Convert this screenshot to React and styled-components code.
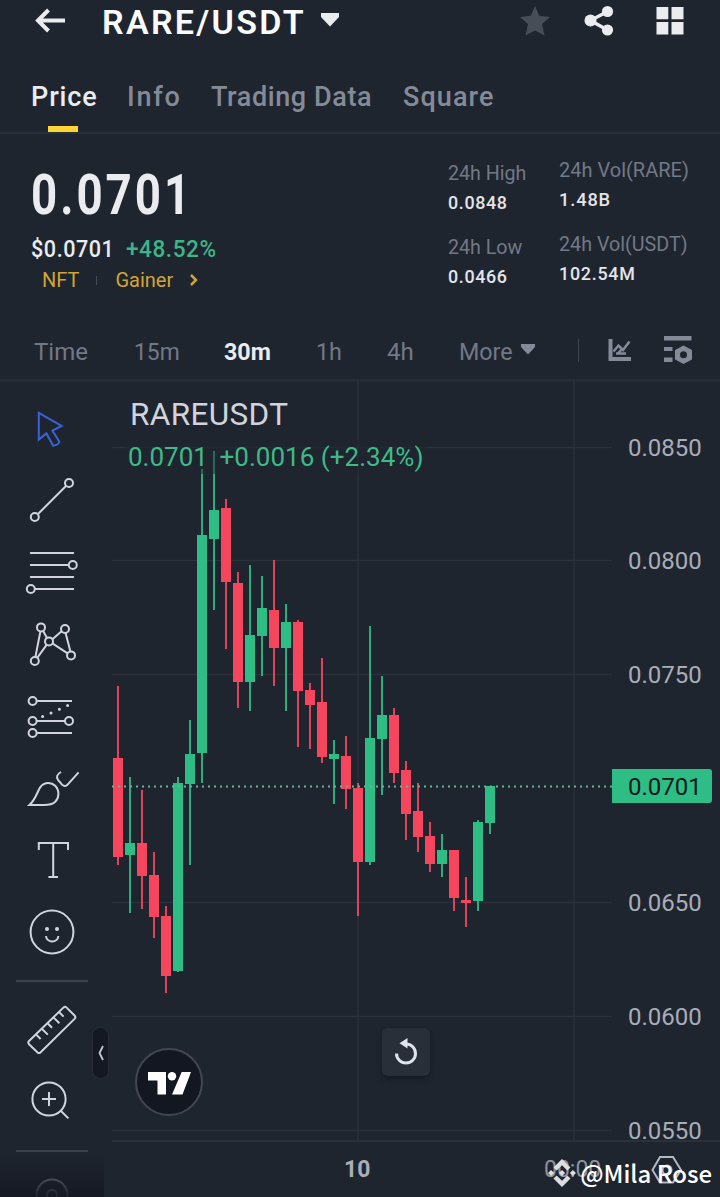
import React from "react";
import styled, { createGlobalStyle } from "styled-components";

const GlobalStyle = createGlobalStyle`
  body {
    margin: 0;
    background-color: #1f252f;
    font-family: Roboto, "Liberation Sans", sans-serif;
  }
`;

const Page = styled.div`
  position: relative;
  display: flex;
  flex-direction: column;
  width: 720px;
  height: 1197px;
  overflow: hidden;
  background-color: #1f252f;
`;

const Label = styled.span`
  display: inline-block;
  white-space: nowrap;
  letter-spacing: ${(props) => (props.$spacing ? `${props.$spacing}px` : "inherit")};
  transform: scaleX(${(props) => props.$stretch || 1});
  transform-origin: left center;
`;

const Header = styled.header`
  display: flex;
  align-items: center;
  height: 42px;
  padding: 0 36px 0 34px;
`;

const Pair = styled.h1`
  flex: 1;
  display: flex;
  align-items: center;
  gap: 14px;
  margin: 1px 0 0 36px;
  font-size: 34px;
  line-height: 40px;
  font-weight: 600;
  letter-spacing: 2.3px;
  color: #fafbfd;
`;

const HeaderActions = styled.div`
  display: flex;
  align-items: center;
  gap: 32px;
`;

const ShareIcon = styled.svg`
  margin-right: 9px;
`;

const Tabs = styled.nav`
  display: grid;
  grid-template-columns: 96px 84px 192px auto;
  height: 90px;
  padding-left: 31px;
  border-bottom: 2px solid #292f39;
  box-sizing: content-box;
`;

const Tab = styled.div`
  display: flex;
  flex-direction: column;
  justify-content: space-between;
  padding-top: 39px;
  font-size: 27px;
  line-height: 32px;
  font-weight: 500;
  letter-spacing: 0.6px;
  color: ${(props) => (props.$active ? "#eaecef" : "#848b98")};
`;

const Underline = styled.div`
  width: 30px;
  height: 6px;
  margin-left: 17px;
  background-color: #fcd535;
`;

const Summary = styled.section`
  display: flex;
  height: 187px;
`;

const PriceBlock = styled.div`
  width: 448px;
  padding: 29px 0 0 31px;
  box-sizing: border-box;
`;

const Price = styled.div`
  height: 66px;
  font-size: 55px;
  line-height: 65px;
  font-weight: 700;
  color: #eaecef;
`;

const Change = styled.div`
  display: grid;
  grid-template-columns: 95px auto;
  margin-top: 5px;
  font-size: 24px;
  line-height: 30px;
  font-weight: 500;
  color: #eaecef;
`;

const Up = styled.span`
  color: #3fb488;
`;

const Tags = styled.div`
  display: flex;
  align-items: center;
  margin: 3px 0 0 11px;
  font-size: 20px;
  line-height: 26px;
  color: #d0a535;
`;

const TagDivider = styled.div`
  width: 1px;
  height: 9px;
  margin: 0 18px 0 17px;
  background-color: #454b56;
`;

const TagArrow = styled.svg`
  margin-left: 16px;
`;

const Stats = styled.div`
  width: ${(props) => props.$width}px;
  padding-top: ${(props) => props.$top}px;
`;

const Stat = styled.div`
  height: 74px;
  font-size: 20px;
  line-height: 30px;
  color: #727986;
`;

const StatValue = styled.div`
  font-size: 19px;
  line-height: 30px;
  font-weight: 500;
  color: #e2e5ea;
`;

const Intervals = styled.div`
  display: grid;
  grid-template-columns: 100px 90px 92px 71px 72px 119px 30px 56px auto;
  align-items: center;
  height: 58px;
  padding-left: 34px;
  border-bottom: 3px solid #262c36;
  font-size: 24px;
`;

const Interval = styled.div`
  display: flex;
  align-items: center;
  gap: 8px;
  margin-top: 3px;
  font-weight: ${(props) => (props.$active ? 700 : 400)};
  color: ${(props) => (props.$active ? "#eaecef" : "#727986")};
`;

const MoreArrow = styled.svg`
  margin: -4px 0 0 -1px;
`;

const IntervalDivider = styled.div`
  width: 1px;
  height: 23px;
  background-color: #404650;
`;

const Workspace = styled.main`
  flex: 1;
  display: flex;
  min-height: 0;
`;

const Toolbar = styled.aside`
  display: flex;
  flex-direction: column;
  align-items: center;
  gap: 16px;
  width: 104px;
  padding-top: 18px;
  box-sizing: border-box;
  overflow: hidden;
`;

const ToolGlyph = styled.svg`
  flex: none;
  width: 56px;
  height: 56px;
  fill: none;
  stroke: ${(props) => props.$color || "#d1d4dc"};
  stroke-width: 1;
`;

const ToolDivider = styled.div`
  flex: none;
  width: 72px;
  height: 2px;
  margin: 4px 0;
  background-color: #3d434e;
`;

const ToolbarFade = styled.div`
  position: absolute;
  left: 0;
  bottom: 0;
  width: 104px;
  height: 48px;
  background: linear-gradient(rgba(20, 24, 35, 0), rgba(20, 24, 35, 0.9));
`;

const ChartArea = styled.div`
  position: relative;
  flex: 1;
`;

const ChartSvg = styled.svg`
  display: block;
  width: 616px;
  height: 815px;
  font-family: Roboto, "Liberation Sans", sans-serif;
`;

const CollapseHandle = styled.div`
  position: absolute;
  left: -12px;
  top: 645px;
  display: flex;
  align-items: center;
  justify-content: center;
  width: 17px;
  height: 52px;
  border-radius: 8px;
  border: 1px solid #272c37;
  box-sizing: border-box;
  background-color: #141823;
`;

const ResetButton = styled.div`
  position: absolute;
  left: 278px;
  top: 646px;
  display: flex;
  align-items: center;
  justify-content: center;
  width: 48px;
  height: 48px;
  border-radius: 6px;
  background-color: #292f39;
  box-shadow: 0 3px 5px rgba(10, 13, 20, 0.45);
`;

const Signature = styled.div`
  position: absolute;
  right: 8px;
  bottom: 7px;
  display: flex;
  align-items: center;
  gap: 4px;
  font-family: "Noto Sans CJK SC", "Noto Sans", sans-serif;
  font-size: 24px;
  line-height: 34px;
  font-weight: 500;
  color: #ffffff;
`;

const GRID = [
  { y: 447.5, label: "0.0850" },
  { y: 560.5, label: "0.0800" },
  { y: 674.5, label: "0.0750" },
  { y: 902.5, label: "0.0650" },
  { y: 1016.5, label: "0.0600" },
  { y: 1130.5, label: "0.0550" },
];

// [rising, high, body top, body bottom, low]
const CANDLES = [
  [0, 686, 758, 857, 865],
  [1, 777, 843, 855, 913],
  [0, 790, 843, 876, 909],
  [0, 852, 875, 917, 938],
  [0, 906, 916, 976, 993],
  [1, 777, 783, 971, 972],
  [1, 720, 754, 784, 865],
  [1, 469, 535, 753, 783],
  [1, 451, 510, 539, 610],
  [0, 499, 508, 582, 649],
  [0, 572, 583, 682, 708],
  [1, 565, 635, 682, 711],
  [1, 576, 608, 636, 676],
  [0, 560, 610, 648, 686],
  [1, 604, 622, 648, 711],
  [0, 620, 622, 691, 747],
  [0, 683, 690, 705, 749],
  [0, 658, 702, 757, 763],
  [1, 740, 754, 759, 804],
  [0, 736, 756, 789, 809],
  [0, 783, 788, 862, 916],
  [1, 626, 738, 862, 865],
  [1, 676, 715, 739, 795],
  [0, 708, 715, 773, 783],
  [0, 761, 770, 814, 840],
  [0, 783, 811, 837, 852],
  [0, 822, 836, 864, 872],
  [1, 834, 850, 864, 877],
  [0, 850, 850, 898, 911],
  [0, 877, 900, 903, 927],
  [1, 820, 822, 901, 911],
  [1, 786, 786, 823, 834],
];

const Chart = () => (
  <ChartSvg viewBox="104 382 616 815">
    <g stroke="#2b313b" strokeWidth="2">
      {GRID.map((line) => (
        <path key={line.label} d={`M112 ${line.y}H612`} strokeWidth="1.5" />
      ))}
      <path d="M358 382V1140M574 382V1140" strokeWidth="1.5" />
      <path d="M112 1141H720" />
    </g>

    {CANDLES.map(([rising, high, top, bottom, low], i) => {
      const x = 118 + i * 12;
      return (
        <g key={x} fill={rising ? "#2ebd85" : "#f6465d"}>
          <rect x={x - 1} y={high} width="2" height={low - high} opacity="0.9" />
          <rect x={x - 5} y={top} width="10" height={bottom - top} />
        </g>
      );
    })}

    <path d="M112 786.5H612" stroke="#62b596" strokeWidth="2" strokeDasharray="2 4" />

    <rect x="124" y="440" width="304" height="34" fill="#1f252f" opacity="0.5" />
    <text x="130" y="425" fontSize="31.5" fill="#d1d4dc" textLength="158">
      RAREUSDT
    </text>
    <g fontSize="26" fill="#3dba88">
      <text x="128" y="465.500">0.0701</text>
      <text x="219.500" y="465.500" textLength="204">+0.0016 (+2.34%)</text>
    </g>

    <g fontSize="24" fill="#a9adb7">
      {GRID.map((line) => (
        <text key={line.label} x="628" y={Math.round(line.y + 8)}>
          {line.label}
        </text>
      ))}
      <text x="344" y="1177" fontWeight="700" fontSize="23">
        10
      </text>
      <text x="544" y="1177" fontSize="23" fill="#8d929d">
        00:00
      </text>
    </g>
    <path d="M612 769H709a3 3 0 0 1 3 3V800a3 3 0 0 1-3 3H612Z" fill="#2ebd85" />
    <text x="628" y="795" fontSize="24" fill="#0c1a1c">
      0.0701
    </text>

    <path
      d="M660 1157H673L681 1170L673 1182.500H660L652.500 1170Z"
      fill="none"
      stroke="#b4b8c1"
      strokeWidth="2"
    />
    <circle cx="667" cy="1170" r="4.500" fill="none" stroke="#b4b8c1" strokeWidth="2" />

    <circle cx="169" cy="1082" r="33" fill="#131722" stroke="#434752" strokeWidth="2" />
    <g fill="#ffffff">
      <path d="M148 1072H166V1094.500H157.500V1080.500H148Z" />
      <circle cx="172" cy="1076.300" r="4.200" />
      <path d="M181.700 1072H191L182.500 1094.500H172Z" />
    </g>
  </ChartSvg>
);

const Tool = ({ color, children }) => (
  <ToolGlyph viewBox="0 0 28 28" $color={color}>
    {children}
  </ToolGlyph>
);

const DrawingTools = () => (
  <Toolbar>
    <Tool color="#3a63d6">
      <path d="M7.400 6.400 18.800 13 14.200 15.300 17.700 20.900Q17.200 22.500 14.600 22.900L11.200 16.700 7.400 19.800Z" />
    </Tool>
    <Tool>
      <circle cx="22.5" cy="5.5" r="2" />
      <circle cx="5.4" cy="22.500" r="2" />
      <path d="M7 21 21 7" />
    </Tool>
    <Tool>
      <path d="M3 4.500H25M3 10.500H22.300M3 16.500H25M5.400 22.500H25" />
      <circle cx="24.400" cy="10.500" r="2" />
      <circle cx="3.400" cy="22.500" r="2" />
    </Tool>
    <Tool>
      <circle cx="8.500" cy="5.700" r="2" />
      <circle cx="20.500" cy="6.500" r="2" />
      <circle cx="12.500" cy="12.700" r="2" />
      <circle cx="5.400" cy="22.500" r="2" />
      <circle cx="23.500" cy="19.700" r="2" />
      <path d="M8.200 7.700 5.700 20.500M9.500 7.400 11.500 11M11.300 14.400 6.600 20.900M14.200 11.600 18.800 7.600M20.800 8.500 23.200 17.700M14.200 13.700 21.800 18.700" />
    </Tool>
    <Tool>
      <circle cx="4.300" cy="6.500" r="2" />
      <circle cx="4.300" cy="16.500" r="2" />
      <circle cx="4.300" cy="22.500" r="2" />
      <circle cx="22.500" cy="16.500" r="2" />
      <path d="M6.300 6.500H24M6.300 16.500H20.500M6.300 22.500H24" />
      <path d="M9.300 14.300h.01M13.500 12.500h.01M17.700 10.600h.01M21.800 8.700h.01" strokeWidth="1.500" strokeLinecap="round" />
    </Tool>
    <Tool>
      <path d="M2.700 22.500C6 19.500 6.500 16 8.100 13.700C9.800 11 13.500 10.800 15.600 12.900C17.900 15.300 17.600 19 15.500 21C13.800 22.500 12 22.500 10 22.500Z" />
      <path d="M18.500 6C16.500 7.200 16 8.500 17 9.900L19 12.300C20 13.300 21 13.200 21.900 12.200L27.300 6.200" />
    </Tool>
    <Tool>
      <path d="M7.400 9V5.500H22V9M14.600 5.500V22.500M12.200 22.500H17" />
    </Tool>
    <Tool>
      <circle cx="14" cy="14" r="10.700" />
      <path d="M11 16C11.300 19.600 16.900 19.600 17.200 16" />
      <path d="M11.500 12.500h.01M16.500 12.500h.01" strokeWidth="2" strokeLinecap="round" />
    </Tool>
    <ToolDivider />
    <Tool>
      <path
        d="M2.400 19.600 19.800 2.700Q20.500 2.100 21.200 2.700L25.400 6.900Q26 7.600 25.400 8.300L8.200 25.200Q7.500 25.800 6.800 25.200L2.400 21Q1.900 20.300 2.400 19.600Z"
      />
      <path d="M6 16.200 8.300 18.500M8.900 13.400 11.900 16.300M11.800 10.600 14 12.900M14.700 7.700 17.700 10.600M17.500 5 19.800 7.300" />
    </Tool>
    <Tool>
      <circle cx="12.500" cy="12.500" r="8.300" />
      <path d="M18.500 18.500 22.200 22.200M9 12.500H16M12.500 9V16" />
    </Tool>
    <ToolDivider />
    <Tool color="#8b8f99">
      <circle cx="14" cy="11.500" r="7.700" />
      <circle cx="14" cy="11.500" r="2.500" />
    </Tool>
  </Toolbar>
);

const App = () => {
  return (
    <>
      <GlobalStyle />
      <Page>
        <Header>
          <svg width="32" height="26" viewBox="0 0 32 26" fill="none" stroke="#eaecef" strokeWidth="4">
            <path d="M31 12.500H4M14.500 2 4 12.500 14.500 23" />
          </svg>
          <Pair>
            <Label>RARE/USDT</Label>
            <svg width="20" height="19" viewBox="0 0 20 19">
              <path d="M1 1H19V5L10 14.500 1 5Z" fill="#eaecef" />
            </svg>
          </Pair>
          <HeaderActions>
            <svg width="32" height="32" viewBox="0 0 32 32">
              <path
                d="M16 1 20.300 10.700 31 11.900 23 19 25.500 30.500 16 25.500 6.500 30.500 9 19 1 11.900 11.700 10.700Z"
                fill="#474d57"
              />
            </svg>
            <ShareIcon width="32" height="32" viewBox="0 0 32 32" fill="#eaecef">
              <path d="M24.500 6.500 7.500 15.500 24.500 25" fill="none" stroke="#eaecef" strokeWidth="3.500" />
              <circle cx="24.500" cy="6.500" r="5.600" />
              <circle cx="7.500" cy="15.500" r="6" />
              <circle cx="24.500" cy="25" r="5.600" />
            </ShareIcon>
            <svg width="28" height="28" viewBox="0 0 28 28" fill="#eaecef">
              <path d="M0.500 0H12.300V12.200H0.500ZM15.500 0H27.500V12.200H15.500ZM0.500 15H12.300V27.500H0.500ZM15.500 15H27.500V27.500H15.500Z" />
            </svg>
          </HeaderActions>
        </Header>

        <Tabs>
          <Tab $active>
            <Label $spacing={0.9}>Price</Label>
            <Underline />
          </Tab>
          <Tab>
            <Label $spacing={1.8}>Info</Label>
          </Tab>
          <Tab>
            <Label>Trading Data</Label>
          </Tab>
          <Tab>
            <Label $spacing={1.1}>Square</Label>
          </Tab>
        </Tabs>

        <Summary>
          <PriceBlock>
            <Price>
              <Label $stretch={0.83} $spacing={3.6}>
                0.0701
              </Label>
            </Price>
            <Change>
              <Label $stretch={0.9} $spacing={0.6}>
                $0.0701
              </Label>
              <Up>
                <Label $stretch={0.94} $spacing={0.6}>
                  +48.52%
                </Label>
              </Up>
            </Change>
            <Tags>
              NFT
              <TagDivider />
              Gainer
              <TagArrow width="10" height="14" viewBox="0 0 10 14">
                <path d="M2 2 7 7 2 12" fill="none" stroke="#d0a535" strokeWidth="2.500" />
              </TagArrow>
            </Tags>
          </PriceBlock>
          <Stats $width={111} $top={24}>
            <Stat>
              <Label $stretch={0.98}>24h High</Label>
              <StatValue>
                <Label $stretch={0.94} $spacing={0.7}>
                  0.0848
                </Label>
              </StatValue>
            </Stat>
            <Stat>
              <Label $stretch={0.98}>24h Low</Label>
              <StatValue>
                <Label $stretch={0.94} $spacing={0.7}>
                  0.0466
                </Label>
              </StatValue>
            </Stat>
          </Stats>
          <Stats $width={161} $top={21}>
            <Stat>
              <Label>24h Vol(RARE)</Label>
              <StatValue>
                <Label $stretch={0.96} $spacing={0.9}>
                  1.48B
                </Label>
              </StatValue>
            </Stat>
            <Stat>
              <Label $stretch={0.985}>24h Vol(USDT)</Label>
              <StatValue>
                <Label $stretch={0.94} $spacing={0.8}>
                  102.54M
                </Label>
              </StatValue>
            </Stat>
          </Stats>
        </Summary>

        <Intervals>
          <Interval>Time</Interval>
          <Interval>
            <Label $stretch={0.95}>15m</Label>
          </Interval>
          <Interval $active>
            <Label $stretch={0.97}>30m</Label>
          </Interval>
          <Interval>
            <Label $stretch={0.97}>1h</Label>
          </Interval>
          <Interval>4h</Interval>
          <Interval>
            <Label $stretch={0.97}>More</Label>
            <MoreArrow width="14" height="11" viewBox="0 0 14 11">
              <path d="M0 0H14V3L7 10.500 0 3Z" fill="#848b98" />
            </MoreArrow>
          </Interval>
          <IntervalDivider />
          <svg width="24" height="24" viewBox="0 0 24 24" fill="none" stroke="#848b98" strokeWidth="3">
            <path d="M2.500 1V21H23" strokeWidth="4" />
            <path d="M5.500 13.500 10.500 7.500 15 12 21.500 3.500M8 15.500H18M10 15.500 13.500 11.500" strokeWidth="2.500" />
          </svg>
          <svg width="30" height="30" viewBox="0 0 30 30" fill="#848b98">
            <path d="M0 1H27.500V5.500H0ZM0 12H8.500V16H0ZM0 22.500H8.500V27H0Z" />
            <path
              fillRule="evenodd"
              d="M19.500 10.500 28 15V24.500L19.500 29 11 24.500V15ZM19.500 16.300A3.500 3.500 0 1 0 19.500 23.300A3.500 3.500 0 1 0 19.500 16.300Z"
            />
          </svg>
        </Intervals>

        <Workspace>
          <DrawingTools />
          <ChartArea>
            <Chart />
            <CollapseHandle>
              <svg width="6" height="16" viewBox="0 0 6 16" fill="none" stroke="#c5c8d0" strokeWidth="1.800">
                <path d="M5 1 1.500 8 5 15" />
              </svg>
            </CollapseHandle>
            <ResetButton>
              <svg width="24" height="28" viewBox="0 0 24 28" fill="none" stroke="#e0e3ea" strokeWidth="3">
                <path d="M2.500 15.500A9.500 9.500 0 1 0 12 6" />
                <path d="M13.500 0V10.500L5.500 5.200Z" fill="#e0e3ea" stroke="none" />
              </svg>
            </ResetButton>
          </ChartArea>
        </Workspace>

        <ToolbarFade />
        <Signature>
          <svg width="28" height="28" viewBox="0 0 28 28" fill="#dcdde0">
            <path d="M14 0 22.500 8.500 19.300 11.600 14 6.300 8.700 11.600 5.500 8.500ZM14 28 22.500 19.500 19.300 16.400 14 21.700 8.700 16.400 5.500 19.500ZM14 10.900 17.100 14 14 17.100 10.900 14ZM3.100 10.900 6.200 14 3.100 17.100 0 14ZM24.900 10.900 28 14 24.900 17.100 21.800 14Z" />
          </svg>
          @Mila Rose
        </Signature>
      </Page>
    </>
  );
};

export default App;
